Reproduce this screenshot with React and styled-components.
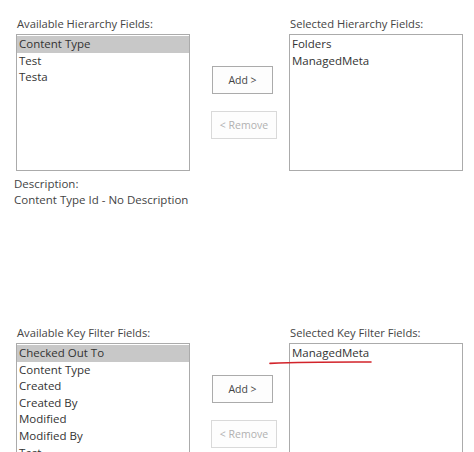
import React from "react";
import styled, { createGlobalStyle } from "styled-components";

const GlobalStyle = createGlobalStyle`
  html, body {
    margin: 0;
    padding: 0;
    background: #ffffff;
    overflow: hidden;
  }
  body {
    font-family: "Open Sans", "Noto Sans", sans-serif;
    font-size: 11.5px;
    color: #444444;
  }
`;

const Page = styled.div`
  width: 474px;
  height: 452px;
  padding: 16px 0 0 16px;
  box-sizing: border-box;
  overflow: hidden;
`;

const Picker = styled.div`
  position: relative;
  display: grid;
  grid-template-columns: 174px 99px 174px;
  grid-template-rows: 18px 137px;
  margin-top: ${(p) => p.$top || 0}px;
`;

const FieldLabel = styled.div`
  padding-left: 1px;
  line-height: 16px;
  font-size: 11.2px;
  color: #444444;
  white-space: nowrap;
`;

const ListBox = styled.div`
  border: 1px solid #ababab;
  background: #ffffff;
  overflow: hidden;
  padding-top: 1px;
`;

const Option = styled.div`
  padding-left: 2px;
  line-height: 16.6px;
  height: 16.6px;
  color: #333333;
  white-space: nowrap;
  background: ${(p) => (p.$selected ? "#c8c8c8" : "transparent")};
`;

const ButtonColumn = styled.div`
  display: flex;
  flex-direction: column;
  align-items: flex-start;
  gap: 17px;
  padding: 32px 0 0 21px;
`;

const MoveButton = styled.button`
  font-family: inherit;
  font-size: 10.5px;
  height: 28px;
  width: ${(p) => p.$width}px;
  margin-left: ${(p) => p.$shift || 0}px;
  padding: 0;
  background: #fdfdfd;
  border: 1px solid ${(p) => (p.disabled ? "#d9d9d9" : "#ababab")};
  color: ${(p) => (p.disabled ? "#b1b1b1" : "#444444")};
`;

const Description = styled.div`
  padding: 5px 0 0 0;
  margin-left: -2px;
  line-height: 16px;
  color: #444444;
`;

const Marker = styled.svg`
  position: absolute;
  left: 253px;
  top: 34px;
  pointer-events: none;
`;

const Field = ({ items, selected }) => (
  <ListBox>
    {items.map((it) => (
      <Option key={it} $selected={it === selected}>
        {it}
      </Option>
    ))}
  </ListBox>
);

const Buttons = () => (
  <ButtonColumn>
    <MoveButton $width={61} $shift={1}>Add &gt;</MoveButton>
    <MoveButton $width={66} disabled>
      &lt; Remove
    </MoveButton>
  </ButtonColumn>
);

export default function App() {
  return (
    <>
      <GlobalStyle />
      <Page>
        <Picker>
          <FieldLabel>Available Hierarchy Fields:</FieldLabel>
          <div />
          <FieldLabel>Selected Hierarchy Fields:</FieldLabel>
          <Field items={["Content Type", "Test", "Testa"]} selected="Content Type" />
          <Buttons />
          <Field items={["Folders", "ManagedMeta"]} />
        </Picker>
        <Description>
          Description:
          <br />
          Content Type Id - No Description
        </Description>
        <Picker $top={117}>
          <FieldLabel>Available Key Filter Fields:</FieldLabel>
          <div />
          <FieldLabel>Selected Key Filter Fields:</FieldLabel>
          <Field
            items={[
              "Checked Out To",
              "Content Type",
              "Created",
              "Created By",
              "Modified",
              "Modified By",
              "Test",
              "Testa",
            ]}
            selected="Checked Out To"
          />
          <Buttons />
          <Field items={["ManagedMeta"]} />
          <Marker width="104" height="6" viewBox="0 0 104 6">
            <path
              d="M1 4.4 C 20 3.6, 50 2.8, 102 3"
              stroke="#d2232a"
              strokeWidth="1.6"
              fill="none"
              strokeLinecap="round"
            />
          </Marker>
        </Picker>
      </Page>
    </>
  );
}
